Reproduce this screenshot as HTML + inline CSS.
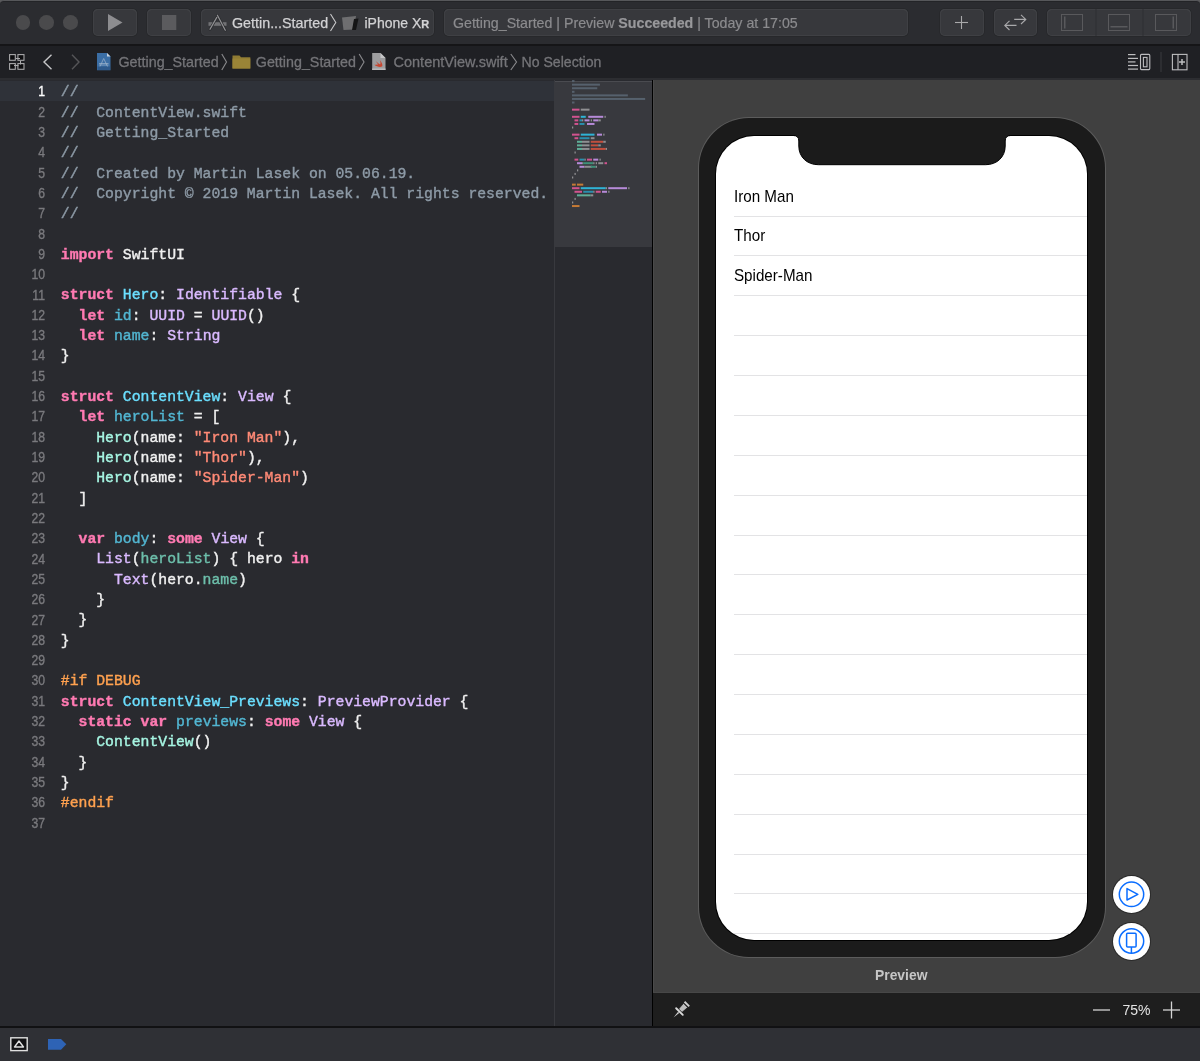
<!DOCTYPE html>
<html><head><meta charset="utf-8">
<style>
*{box-sizing:border-box;margin:0;padding:0}
html,body{width:1200px;height:1061px;overflow:hidden;background:#5a5a5c;font-family:"Liberation Sans",sans-serif;-webkit-font-smoothing:antialiased}
#root{position:absolute;left:0;top:0;width:1200px;height:1061px;overflow:hidden;will-change:transform;background:#5a5a5c}
.abs{position:absolute}
#toolbar{position:absolute;left:0;top:0;width:1200px;height:44px;background:#2b2c30;border-top:1px solid #56575a;border-radius:4px 4px 0 0;box-shadow:inset 0 1px 0 #232427}
#tbline{position:absolute;left:0;top:44px;width:1200px;height:2px;background:#151517}
.light{position:absolute;top:15.2px;width:14.7px;height:14.7px;border-radius:50%;background:#4a4a4c}
.btn{position:absolute;top:9px;height:27px;background:#37383c;border-radius:5px;box-shadow:inset 0 0 0 1px #3f4044,inset 0 1px 0 #45464a,0 0 0 1px #27282b}
#crumb{position:absolute;left:0;top:46px;width:1200px;height:32px;background:#1f2024}
#crumbline{position:absolute;left:0;top:78px;width:1200px;height:2px;background:#2c2d31}
.ctext{position:absolute;top:53px;font-size:14.3px;color:#747478;-webkit-text-stroke:0.3px currentColor;white-space:nowrap;line-height:18px}
#editor{position:absolute;left:0;top:80px;width:554px;height:946px;background:#292a2f}
#curline{position:absolute;left:0;top:81px;width:554px;height:20px;background:#2f3239}
#gutter{position:absolute;left:0;top:81.4px;width:45px;text-align:right;font-size:14.2px;line-height:20.32px;color:#7a7a7e;-webkit-text-stroke:0.35px currentColor;transform:scaleX(0.86);transform-origin:45px 0}
#code{position:absolute;left:60.8px;top:82.3px;font-family:"Liberation Mono",monospace;font-size:14.78px;line-height:20.32px;color:#f0f0f0;white-space:pre;-webkit-text-stroke:0.4px currentColor}
#minimap{position:absolute;left:554px;top:80px;width:98px;height:946px;background:#292a2f;border-left:1px solid #38393e}
#canvas{position:absolute;left:652px;top:80px;width:548px;height:913px;background:#404040;border-left:1px solid #000}
#canvasbar{position:absolute;left:652px;top:993px;width:548px;height:33px;background:#1e1e1e;border-left:1px solid #000}
#botline{position:absolute;left:0;top:1026px;width:1200px;height:2px;background:#111113}
#bottom{position:absolute;left:0;top:1028px;width:1200px;height:33px;background:#2f3035}
.sep{position:absolute;left:18px;right:0;height:1px;background:#e3e3e5}
.row{position:absolute;left:17.8px;font-size:15.9px;line-height:0;color:#000;white-space:nowrap;transform:scaleX(0.955);transform-origin:0 0}
.k{color:#ff7ab2;font-weight:bold}
.c{color:#8d9aa6}
.t{color:#6bdfff}
.o{color:#52b6d2}
.p{color:#dabaff}
.s{color:#ff8a76}
.m{color:#a6f5e2}
.v{color:#6dbfab}
.pp{color:#ffa14f}
</style></head><body><div id="root">
<div id="toolbar"></div>
<div id="tbline"></div>
<div class="light" style="left:15.5px"></div>
<div class="light" style="left:39.3px"></div>
<div class="light" style="left:63.1px"></div>
<div class="btn" style="left:93px;width:44px"></div>
<div class="btn" style="left:147px;width:44px"></div>
<div class="btn" style="left:201px;width:232.5px"></div>
<div class="btn" style="left:444px;width:464px"></div>
<div class="btn" style="left:939.5px;width:44px"></div>
<div class="btn" style="left:993.5px;width:43.5px"></div>
<div class="btn" style="left:1047px;width:144px"></div>
<svg class="abs" style="left:0;top:0" width="1200" height="44">
<polygon points="108,14 122.5,22.5 108,31" fill="#8d8d90"/>
<rect x="162" y="15" width="14.3" height="15" fill="#5b5b5e"/>
<rect x="208.5" y="22.2" width="18" height="3.6" fill="#727275"/>
<g stroke="#27282b" stroke-width="2.6" fill="none" stroke-linecap="round">
<line x1="210" y1="29.3" x2="216.8" y2="17.4"/>
<line x1="217.4" y1="15.3" x2="225.3" y2="30.2"/>
</g>
<g stroke="#909093" stroke-width="1.3" fill="none" stroke-linecap="round">
<line x1="210" y1="29.3" x2="216.8" y2="17.4"/>
<line x1="217.4" y1="15.3" x2="225.3" y2="30.2"/>
</g>
<path d="M330.5,14 L335.8,22.5 L330.5,31" stroke="#c9c9cb" stroke-width="1.1" fill="none"/>
<polygon points="342,17.5 356,16 354,29.5 343.5,30" fill="#6e6e70"/>
<polygon points="354,19 358.5,18.5 356,30 352,30" fill="#151516"/>
<g stroke="#a9a9ab" stroke-width="1.1" fill="none">
<line x1="961.5" y1="16" x2="961.5" y2="29"/>
<line x1="955" y1="22.5" x2="968" y2="22.5"/>
<path d="M1004.8,25.4 H1016.5 M1009.5,20.8 L1004.8,25.4 L1009.5,30"/>
<path d="M1014.2,19.4 H1025.8 M1021,14.8 L1025.8,19.4 L1021,24"/>
</g>
<line x1="1096" y1="9" x2="1096" y2="36" stroke="#2e2f33" stroke-width="1"/>
<line x1="1143" y1="9" x2="1143" y2="36" stroke="#2e2f33" stroke-width="1"/>
<g stroke="#59595c" stroke-width="1" fill="none">
<rect x="1061.5" y="14.5" width="21" height="16"/>
<rect x="1108.5" y="14.5" width="21" height="16"/>
<rect x="1155.5" y="14.5" width="21" height="16"/>
</g>
<g fill="#59595c">
<rect x="1064" y="16.5" width="1.5" height="12"/>
<rect x="1110.5" y="26" width="17" height="1.5"/>
<rect x="1172.5" y="16.5" width="1.5" height="12"/>
</g>
</svg>
<div class="abs" style="left:232px;top:15px;font-size:14.3px;line-height:16px;color:#d2d2d4;-webkit-text-stroke:0.25px currentColor;white-space:nowrap">Gettin...Started</div>
<div class="abs" style="left:364.5px;top:15px;font-size:14px;line-height:16px;color:#d2d2d4;-webkit-text-stroke:0.25px currentColor;white-space:nowrap">iPhone X<span style="font-size:11px;font-weight:bold">R</span></div>
<div class="abs" style="left:453px;top:15px;font-size:14.2px;line-height:16px;color:#8b8b8e;-webkit-text-stroke:0.2px currentColor;white-space:nowrap">Getting_Started | Preview <b style="color:#98989b">Succeeded</b> | Today at 17:05</div>

<div id="crumb"></div>
<div id="crumbline"></div>
<svg class="abs" style="left:0;top:46px" width="1200" height="32">
<g fill="#0e0e10"><rect x="9" y="8" width="7" height="7"/><rect x="17.3" y="8" width="7.3" height="7"/><rect x="9" y="17" width="7" height="7"/><rect x="17.3" y="17" width="7.3" height="7"/></g>
<g stroke="#ababad" stroke-width="1.1" fill="none">
<rect x="9.6" y="8.6" width="5.7" height="5.7"/>
<rect x="17.9" y="8.6" width="6.1" height="5.7"/>
<rect x="9.6" y="17.6" width="5.7" height="5.7"/>
<rect x="17.9" y="17.6" width="6.1" height="5.7"/>
<path d="M15.8,12.5 H20 M20.5,14.9 V18.5 M18.5,19.5 H14" stroke-width="1"/>
</g>
<path d="M51.5,8.8 L44,16 L51.5,23.2" stroke="#c6c6c8" stroke-width="1.4" fill="none"/>
<path d="M72,8.8 L79,16 L72,23.2" stroke="#555558" stroke-width="1.4" fill="none"/>
<path d="M97,7 H107 L110.5,10.5 V24.3 H97 Z" fill="#3b6ea5"/>
<path d="M107,7 V10.5 H110.5" fill="#c9d3de"/>
<g stroke="#9fb4cc" stroke-width="0.7" fill="none"><path d="M99.5,21.5 L103.7,12.5 L108,21.5 M99,17.5 H108.5 M99,19 H108.5"/></g>
<rect x="97.5" y="20.5" width="12.5" height="3.5" fill="#2e5a8c"/>
<path d="M221.8,8 L226.5,16 L221.8,24" stroke="#88888b" stroke-width="1.15" fill="none"/>
<path d="M359.2,8 L364,16 L359.2,24" stroke="#88888b" stroke-width="1.15" fill="none"/>
<path d="M510.8,8 L516.5,16 L510.8,24" stroke="#88888b" stroke-width="1.15" fill="none"/>
<path d="M232.5,9.5 H239.5 L241,11.2 H250.3 V22.5 H232.5 Z" fill="#8f7b33"/>
<rect x="232.5" y="12.5" width="17.8" height="10" fill="#9a8437"/>
<path d="M372.2,7 H380.5 L385.5,12 V24 H372.2 Z" fill="#9d9d9f"/>
<path d="M380.5,7 V12 H385.5 Z" fill="#c4c4c6"/>
<rect x="372.2" y="22.5" width="13.3" height="1.5" fill="#b8b8ba"/>
<path d="M374.4,18.8 C376.8,20.8 380.3,21.6 382.3,20.3 C382.8,18.8 381.8,16.2 379.8,14 C380.6,16 380.7,17.6 380.1,18.5 C378.6,17.6 376.6,16 375.6,14.8 C376.4,16.4 377.4,17.6 378.2,18.5 C377,18.2 375.5,18.6 374.4,18.8 Z" fill="#c8452f"/>
</svg>
<div class="ctext" style="left:118.5px">Getting_Started</div>
<div class="ctext" style="left:255.8px">Getting_Started</div>
<div class="ctext" style="left:393.5px;font-size:14.5px">ContentView.swift</div>
<div class="ctext" style="left:521.5px;font-size:14.1px">No Selection</div>
<svg class="abs" style="left:1120px;top:46px" width="80" height="32">
<g fill="#bdbdbf">
<rect x="8" y="8" width="7.5" height="1.2"/>
<rect x="8" y="11.8" width="10" height="1.2"/>
<rect x="8" y="15.3" width="7.5" height="1.2"/>
<rect x="8" y="18.9" width="10" height="1.2"/>
<rect x="8" y="22.5" width="10" height="1.2"/>
</g>
<g stroke="#bdbdbf" stroke-width="1.1" fill="none">
<rect x="20.5" y="8.4" width="9.3" height="15.2" rx="1"/>
<rect x="23.4" y="11.4" width="3.6" height="9.4"/>
<rect x="52.4" y="8.4" width="14.6" height="15.4"/>
<line x1="58" y1="8.4" x2="58" y2="23.8"/>
<path d="M62,13 V19 M59,16 H65" stroke-width="1.5"/>
</g>
<rect x="40.5" y="6" width="1" height="20" fill="#3a3b3f"/>
</svg>

<div id="editor"></div>
<div id="curline"></div>
<div id="gutter"><span style="color:#fff">1</span><br>2<br>3<br>4<br>5<br>6<br>7<br>8<br>9<br>10<br>11<br>12<br>13<br>14<br>15<br>16<br>17<br>18<br>19<br>20<br>21<br>22<br>23<br>24<br>25<br>26<br>27<br>28<br>29<br>30<br>31<br>32<br>33<br>34<br>35<br>36<br>37</div>
<div id="code"><span class="c">//
//  ContentView.swift
//  Getting_Started
//
//  Created by Martin Lasek on 05.06.19.
//  Copyright © 2019 Martin Lasek. All rights reserved.
//</span>

<span class="k">import</span> SwiftUI

<span class="k">struct</span> <span class="t">Hero</span>: <span class="p">Identifiable</span> {
  <span class="k">let</span> <span class="o">id</span>: <span class="p">UUID</span> = <span class="p">UUID</span>()
  <span class="k">let</span> <span class="o">name</span>: <span class="p">String</span>
}

<span class="k">struct</span> <span class="t">ContentView</span>: <span class="p">View</span> {
  <span class="k">let</span> <span class="o">heroList</span> = [
    <span class="m">Hero</span>(name: <span class="s">"Iron Man"</span>),
    <span class="m">Hero</span>(name: <span class="s">"Thor"</span>),
    <span class="m">Hero</span>(name: <span class="s">"Spider-Man"</span>)
  ]

  <span class="k">var</span> <span class="o">body</span>: <span class="k">some</span> <span class="p">View</span> {
    <span class="p">List</span>(<span class="v">heroList</span>) { hero <span class="k">in</span>
      <span class="p">Text</span>(hero.<span class="v">name</span>)
    }
  }
}

<span class="pp">#if DEBUG</span>
<span class="k">struct</span> <span class="t">ContentView_Previews</span>: <span class="p">PreviewProvider</span> {
  <span class="k">static</span> <span class="k">var</span> <span class="o">previews</span>: <span class="k">some</span> <span class="p">View</span> {
    <span class="m">ContentView</span>()
  }
}
<span class="pp">#endif</span>
</div>

<div id="minimap"></div>
<svg class="abs" style="left:555px;top:80px" width="97" height="946"><rect x="0" y="1" width="97" height="166" fill="#38393e"/><rect x="0" y="1" width="97" height="1" fill="#4a4b50"/><rect x="17.00" y="0.10" width="2.50" height="2" fill="#56616d"/><rect x="17.00" y="3.67" width="27.93" height="2" fill="#56616d"/><rect x="17.00" y="7.24" width="25.27" height="2" fill="#56616d"/><rect x="17.00" y="10.81" width="2.50" height="2" fill="#56616d"/><rect x="17.00" y="14.38" width="55.86" height="2" fill="#56616d"/><rect x="17.00" y="17.95" width="73.15" height="2" fill="#56616d"/><rect x="17.00" y="21.52" width="2.50" height="2" fill="#56616d"/><rect x="17.00" y="28.66" width="7.50" height="2" fill="#d1538f"/><rect x="25.75" y="28.66" width="8.75" height="2" fill="#8f8f92"/><rect x="17.00" y="35.80" width="7.50" height="2" fill="#d1538f"/><rect x="25.75" y="35.80" width="5.00" height="2" fill="#2fb3d6"/><rect x="33.25" y="35.80" width="15.00" height="2" fill="#b68ad8"/><rect x="49.50" y="35.80" width="1.25" height="2" fill="#8f8f92"/><rect x="19.50" y="39.37" width="3.75" height="2" fill="#d1538f"/><rect x="24.50" y="39.37" width="2.50" height="2" fill="#2a8fae"/><rect x="27.00" y="39.37" width="1.25" height="2" fill="#8f8f92"/><rect x="29.50" y="39.37" width="5.00" height="2" fill="#b68ad8"/><rect x="35.75" y="39.37" width="1.25" height="2" fill="#8f8f92"/><rect x="38.25" y="39.37" width="5.00" height="2" fill="#b68ad8"/><rect x="43.25" y="39.37" width="2.50" height="2" fill="#8f8f92"/><rect x="19.50" y="42.94" width="3.75" height="2" fill="#d1538f"/><rect x="24.50" y="42.94" width="5.00" height="2" fill="#2a8fae"/><rect x="32.00" y="42.94" width="7.50" height="2" fill="#b68ad8"/><rect x="17.00" y="46.51" width="1.25" height="2" fill="#8f8f92"/><rect x="17.00" y="53.65" width="7.50" height="2" fill="#d1538f"/><rect x="25.75" y="53.65" width="13.75" height="2" fill="#2fb3d6"/><rect x="42.00" y="53.65" width="5.00" height="2" fill="#b68ad8"/><rect x="48.25" y="53.65" width="1.25" height="2" fill="#8f8f92"/><rect x="19.50" y="57.22" width="3.75" height="2" fill="#d1538f"/><rect x="24.50" y="57.22" width="10.00" height="2" fill="#2a8fae"/><rect x="35.75" y="57.22" width="3.75" height="2" fill="#8f8f92"/><rect x="22.00" y="60.79" width="5.00" height="2" fill="#5fae98"/><rect x="27.00" y="60.79" width="7.50" height="2" fill="#8f8f92"/><rect x="35.75" y="60.79" width="12.50" height="2" fill="#c24f3e"/><rect x="48.25" y="60.79" width="2.50" height="2" fill="#8f8f92"/><rect x="22.00" y="64.36" width="5.00" height="2" fill="#5fae98"/><rect x="27.00" y="64.36" width="7.50" height="2" fill="#8f8f92"/><rect x="35.75" y="64.36" width="7.50" height="2" fill="#c24f3e"/><rect x="43.25" y="64.36" width="2.50" height="2" fill="#8f8f92"/><rect x="22.00" y="67.93" width="5.00" height="2" fill="#5fae98"/><rect x="27.00" y="67.93" width="7.50" height="2" fill="#8f8f92"/><rect x="35.75" y="67.93" width="15.00" height="2" fill="#c24f3e"/><rect x="50.75" y="67.93" width="1.25" height="2" fill="#8f8f92"/><rect x="19.50" y="71.50" width="1.25" height="2" fill="#8f8f92"/><rect x="19.50" y="78.64" width="3.75" height="2" fill="#d1538f"/><rect x="24.50" y="78.64" width="5.00" height="2" fill="#2a8fae"/><rect x="29.50" y="78.64" width="1.25" height="2" fill="#8f8f92"/><rect x="32.00" y="78.64" width="5.00" height="2" fill="#d1538f"/><rect x="38.25" y="78.64" width="5.00" height="2" fill="#b68ad8"/><rect x="44.50" y="78.64" width="1.25" height="2" fill="#8f8f92"/><rect x="22.00" y="82.21" width="5.00" height="2" fill="#b68ad8"/><rect x="27.00" y="82.21" width="1.25" height="2" fill="#8f8f92"/><rect x="28.25" y="82.21" width="10.00" height="2" fill="#3f9079"/><rect x="38.25" y="82.21" width="1.25" height="2" fill="#8f8f92"/><rect x="40.75" y="82.21" width="1.25" height="2" fill="#8f8f92"/><rect x="43.25" y="82.21" width="5.00" height="2" fill="#8f8f92"/><rect x="49.50" y="82.21" width="2.50" height="2" fill="#d1538f"/><rect x="24.50" y="85.78" width="5.00" height="2" fill="#b68ad8"/><rect x="29.50" y="85.78" width="7.50" height="2" fill="#8f8f92"/><rect x="35.75" y="85.78" width="5.00" height="2" fill="#3f9079"/><rect x="40.75" y="85.78" width="1.25" height="2" fill="#8f8f92"/><rect x="22.00" y="89.35" width="1.25" height="2" fill="#8f8f92"/><rect x="19.50" y="92.92" width="1.25" height="2" fill="#8f8f92"/><rect x="17.00" y="96.49" width="1.25" height="2" fill="#8f8f92"/><rect x="17.00" y="103.63" width="3.75" height="2" fill="#c57a35"/><rect x="22.00" y="103.63" width="6.25" height="2" fill="#c57a35"/><rect x="17.00" y="107.20" width="7.50" height="2" fill="#d1538f"/><rect x="25.75" y="107.20" width="25.00" height="2" fill="#2fb3d6"/><rect x="50.75" y="107.20" width="1.25" height="2" fill="#8f8f92"/><rect x="53.25" y="107.20" width="18.75" height="2" fill="#b68ad8"/><rect x="73.25" y="107.20" width="1.25" height="2" fill="#8f8f92"/><rect x="19.50" y="110.77" width="7.50" height="2" fill="#d1538f"/><rect x="28.25" y="110.77" width="10.00" height="2" fill="#2a8fae"/><rect x="38.25" y="110.77" width="1.25" height="2" fill="#8f8f92"/><rect x="40.75" y="110.77" width="5.00" height="2" fill="#d1538f"/><rect x="47.00" y="110.77" width="5.00" height="2" fill="#b68ad8"/><rect x="53.25" y="110.77" width="1.25" height="2" fill="#8f8f92"/><rect x="22.00" y="114.34" width="13.75" height="2" fill="#5fae98"/><rect x="35.75" y="114.34" width="2.50" height="2" fill="#8f8f92"/><rect x="19.50" y="117.91" width="1.25" height="2" fill="#8f8f92"/><rect x="17.00" y="121.48" width="1.25" height="2" fill="#8f8f92"/><rect x="17.00" y="125.05" width="7.50" height="2" fill="#c57a35"/></svg>
<div id="canvas"></div>
<div class="abs" style="left:653px;top:80px;width:1px;height:913px;background:#4a4a4a"></div>
<div class="abs" style="left:699px;top:118px;width:406px;height:838.5px;border-radius:50px;background:#1b1b1b;box-shadow:0 0 0 1px #5c5c5c"></div>
<div id="screen" class="abs" style="left:716px;top:135.5px;width:371px;height:804.5px;border-radius:38px;background:#fff;overflow:hidden;box-shadow:0 0 0 1px #000">
<div class="sep" style="top:80.00px"></div><div class="sep" style="top:119.88px"></div><div class="sep" style="top:159.76px"></div><div class="sep" style="top:199.64px"></div><div class="sep" style="top:239.52px"></div><div class="sep" style="top:279.40px"></div><div class="sep" style="top:319.28px"></div><div class="sep" style="top:359.16px"></div><div class="sep" style="top:399.04px"></div><div class="sep" style="top:438.92px"></div><div class="sep" style="top:478.80px"></div><div class="sep" style="top:518.68px"></div><div class="sep" style="top:558.56px"></div><div class="sep" style="top:598.44px"></div><div class="sep" style="top:638.32px"></div><div class="sep" style="top:678.20px"></div><div class="sep" style="top:718.08px"></div><div class="sep" style="top:757.96px"></div><div class="sep" style="top:797.84px"></div>
<div class="row" style="top:61.5px">Iron Man</div>
<div class="row" style="top:100.5px">Thor</div>
<div class="row" style="top:140.6px">Spider-Man</div>
</div>
<svg class="abs" style="left:780px;top:125px" width="240" height="50">
<path d="M10,10.5 H13.3 Q18.8,10.5 18.8,16 V21 C18.8,32 27,39.7 38.3,39.7 H205.7 C217,39.7 225.2,32 225.2,21 V16 Q225.2,10.5 230.7,10.5 H234 V0 H10 Z" fill="#1b1b1b" stroke="#000" stroke-width="1"/>
<rect x="0" y="0" width="240" height="10" fill="#1b1b1b"/>
</svg>
<div class="abs" style="left:1113px;top:876px;width:37px;height:37px;border-radius:50%;background:#fff;box-shadow:0 0 0 1px #2a2a2a"></div>
<div class="abs" style="left:1113px;top:922.5px;width:37px;height:37px;border-radius:50%;background:#fff;box-shadow:0 0 0 1px #2a2a2a"></div>
<svg class="abs" style="left:1100px;top:860px" width="100" height="110">
<g stroke="#0a6dff" stroke-width="1.5" fill="none">
<circle cx="31.5" cy="34.3" r="12.2"/>
<path d="M27,28.6 L37.8,34.3 L27,40 Z" stroke-linejoin="round"/>
<circle cx="31.5" cy="81" r="12.2"/>
<rect x="26.6" y="73.2" width="9.5" height="13.8" rx="1"/>
<line x1="31.4" y1="87" x2="31.4" y2="93"/>
</g>
</svg>
<div class="abs" style="left:875px;top:966.5px;font-size:15px;font-weight:bold;color:#c6c6c6;line-height:16px;transform:scaleX(0.925);transform-origin:0 0">Preview</div>
<div id="canvasbar"></div>
<div class="abs" style="left:653px;top:992px;width:547px;height:1px;background:#474747"></div>
<svg class="abs" style="left:653px;top:993px" width="547" height="33">
<g transform="translate(26.5,18.5) rotate(45)">
<path d="M-2.4,-1.2 L-2.9,-8.6 H2.9 L2.4,-1.2 Z" fill="#bdbdbd" stroke="#101010" stroke-width="0.6"/>
<rect x="-3.3" y="-11.4" width="6.6" height="1.9" fill="#d0d0d0"/>
<rect x="-5.6" y="-0.9" width="11.2" height="1.9" rx="0.9" fill="#dadada"/>
<path d="M-0.8,1.2 L0,8.4 L0.8,1.2 Z" fill="#d0d0d0"/>
</g>
<g stroke="#d4d4d4" stroke-width="1.3">
<line x1="440" y1="17" x2="457" y2="17"/>
<line x1="510" y1="17" x2="527" y2="17"/>
<line x1="518.5" y1="8.5" x2="518.5" y2="25.5"/>
</g>
</svg>
<div class="abs" style="left:1122.5px;top:1002px;font-size:14px;color:#e4e4e4;line-height:16px">75%</div>
<div id="botline"></div>
<div id="bottom"></div>
<svg class="abs" style="left:0;top:1028px" width="120" height="33">
<rect x="10.8" y="9.8" width="16.4" height="12.8" fill="#121214" stroke="#e0e0e0" stroke-width="1.4"/>
<path d="M14.5,19 L19,13 L23.5,19 Z" fill="none" stroke="#e0e0e0" stroke-width="1.4" stroke-linejoin="round"/>
<path d="M48,11 H61 L66.3,16.3 L61,21.7 H48 Z" fill="#2e63b5"/>
</svg>
</div></body></html>
